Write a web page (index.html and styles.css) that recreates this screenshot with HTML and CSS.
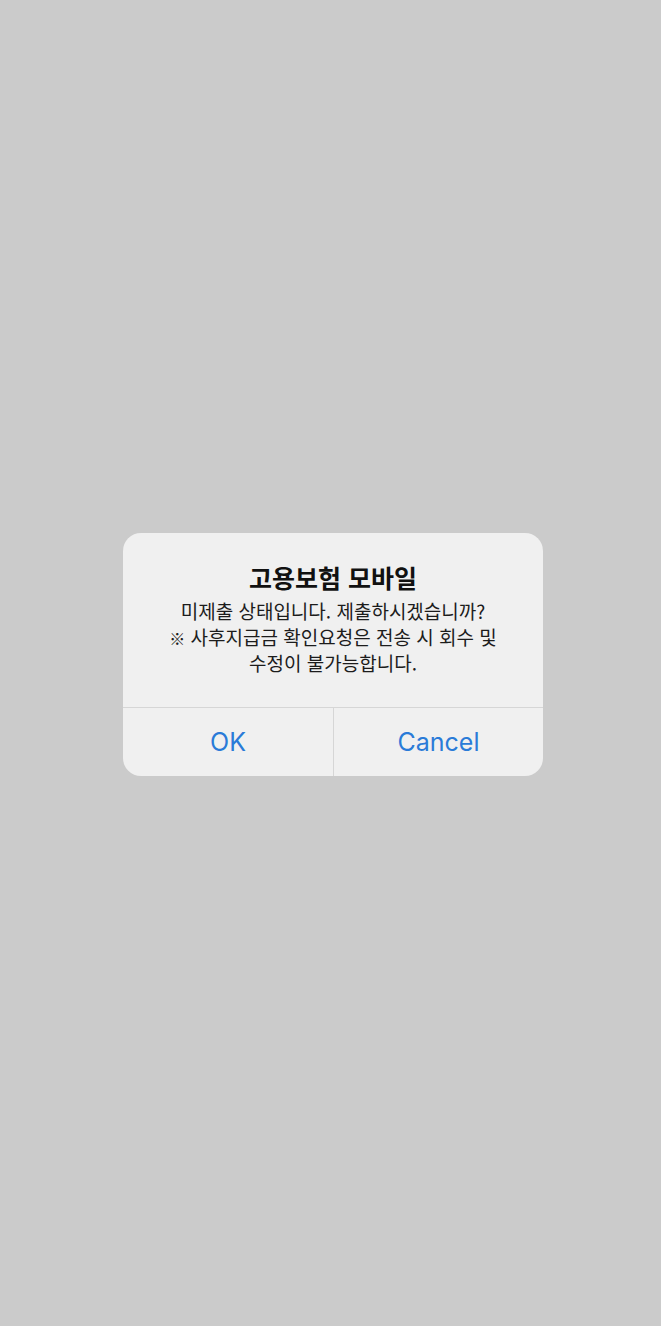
FILE: index.html
```html
<!DOCTYPE html>
<html lang="ko">
<head>
<meta charset="utf-8">
<title>고용보험 모바일</title>
<link rel="stylesheet" href="styles.css">
</head>
<body>
<div class="screen">
  <div class="alert" role="alertdialog">
    <div class="alert-body">
      <div class="alert-title">고용보험 모바일</div>
      <div class="alert-message">미제출 상태입니다. 제출하시겠습니까?<br><span class="mark">※</span> 사후지급금 확인요청은 전송 시 회수 및<br>수정이 불가능합니다.</div>
    </div>
    <div class="alert-actions">
      <button class="alert-btn">OK</button>
      <button class="alert-btn">Cancel</button>
    </div>
  </div>
</div>
</body>
</html>
```

FILE: styles.css
```css
html, body {
  margin: 0;
  padding: 0;
  background: #cbcbcb;
}
.screen {
  width: 661px;
  height: 1326px;
  display: flex;
  flex-direction: column;
  align-items: center;
  padding-top: 533px;
  box-sizing: border-box;
  font-family: "Noto Sans CJK KR", "Noto Sans", sans-serif;
}
.alert {
  width: 420px;
  background: #f0f0f0;
  border-radius: 18px;
  overflow: hidden;
  margin-left: 5px;
}
.alert-body {
  height: 175px;
  box-sizing: border-box;
  padding-top: 28px;
  text-align: center;
  border-bottom: 1px solid #d6d6d6;
}
.alert-title {
  font-size: 25px;
  font-weight: 700;
  line-height: 32px;
  color: #111;
}
.alert-message {
  margin-top: 5px;
  font-size: 19px;
  line-height: 26px;
  color: #1c1c1c;
}
.mark {
  font-size: 16px;
  font-weight: 700;
  line-height: 1;
}
.alert-actions {
  display: grid;
  grid-template-columns: 1fr 1fr;
  height: 68px;
}
.alert-btn {
  border: 0;
  background: transparent;
  color: #2a7bd8;
  font-family: "Inter", "Liberation Sans", sans-serif;
  font-size: 25px;
  padding: 0;
  margin: 0;
}
.alert-btn + .alert-btn {
  border-left: 1px solid #d6d6d6;
}
```
